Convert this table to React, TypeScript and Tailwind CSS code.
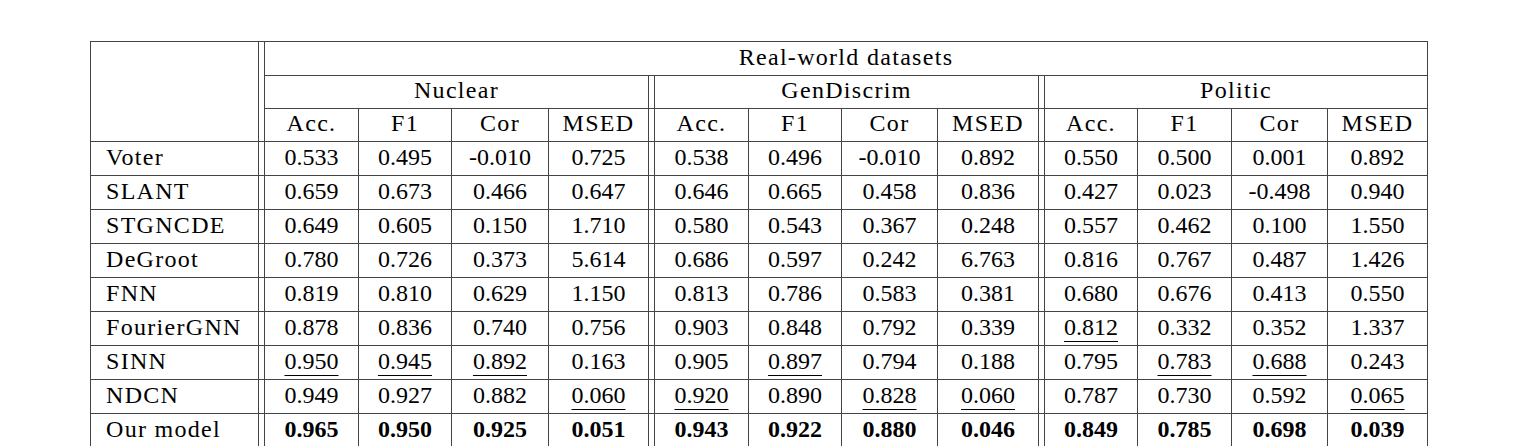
import React from 'react';

type Row = { name: string; values: string[] };

// "_" prefix marks the second best result (underlined)
const rows: Row[] = [
  { name: 'Voter', values: ['0.533', '0.495', '-0.010', '0.725', '0.538', '0.496', '-0.010', '0.892', '0.550', '0.500', '0.001', '0.892'] },
  { name: 'SLANT', values: ['0.659', '0.673', '0.466', '0.647', '0.646', '0.665', '0.458', '0.836', '0.427', '0.023', '-0.498', '0.940'] },
  { name: 'STGNCDE', values: ['0.649', '0.605', '0.150', '1.710', '0.580', '0.543', '0.367', '0.248', '0.557', '0.462', '0.100', '1.550'] },
  { name: 'DeGroot', values: ['0.780', '0.726', '0.373', '5.614', '0.686', '0.597', '0.242', '6.763', '0.816', '0.767', '0.487', '1.426'] },
  { name: 'FNN', values: ['0.819', '0.810', '0.629', '1.150', '0.813', '0.786', '0.583', '0.381', '0.680', '0.676', '0.413', '0.550'] },
  { name: 'FourierGNN', values: ['0.878', '0.836', '0.740', '0.756', '0.903', '0.848', '0.792', '0.339', '_0.812', '0.332', '0.352', '1.337'] },
  { name: 'SINN', values: ['_0.950', '_0.945', '_0.892', '0.163', '0.905', '_0.897', '0.794', '0.188', '0.795', '_0.783', '_0.688', '0.243'] },
  { name: 'NDCN', values: ['0.949', '0.927', '0.882', '_0.060', '_0.920', '0.890', '_0.828', '_0.060', '0.787', '0.730', '0.592', '_0.065'] },
];

const ours = ['0.965', '0.950', '0.925', '0.051', '0.943', '0.922', '0.880', '0.046', '0.849', '0.785', '0.698', '0.039'];

const metrics = ['Acc.', 'F1', 'Cor', 'MSED'];
const groups = ['Nuclear', 'GenDiscrim', 'Politic'];

const line = 'border-r border-b border-[#444]';
const cell = line + ' flex items-center justify-center pb-[4px]';
const label = 'tracking-[1.3px]';

const Value: React.FC<{ v: string; bold?: boolean }> = ({ v, bold }) => {
  const under = v.startsWith('_');
  const text = under ? v.slice(1) : v;
  return (
    <div className={cell}>
      <span
        className={
          (bold ? 'font-bold ' : '') +
          (under ? 'underline decoration-1 underline-offset-[6px]' : '')
        }
      >
        {text}
      </span>
    </div>
  );
};

const DataRow: React.FC<{ name: string; values: string[]; bold?: boolean }> = ({ name, values, bold }) => (
  <>
    <div className={line + ' flex items-center pl-[15px] pb-[4px] ' + label}>{name}</div>
    <div className={line} />
    {values.slice(0, 4).map((v, i) => (
      <Value key={'a' + i} v={v} bold={bold} />
    ))}
    <div className={line} />
    {values.slice(4, 8).map((v, i) => (
      <Value key={'b' + i} v={v} bold={bold} />
    ))}
    <div className={line} />
    {values.slice(8, 12).map((v, i) => (
      <Value key={'c' + i} v={v} bold={bold} />
    ))}
  </>
);

export default function App() {
  return (
    <div
      className="w-[1518px] h-[446px] overflow-hidden bg-white text-black pl-[90px] pt-[41px] text-[24px] leading-none"
      style={{ fontFamily: '"Liberation Serif", "DejaVu Serif", serif' }}
    >
      <div className="w-max border-l border-t border-[#444] grid grid-cols-[168px_6px_94px_93px_97px_100px_6px_94px_93px_96px_101px_6px_93px_94px_96px_100px] grid-rows-[34px_33px_33px_34px_34px_34px_34px_34px_34px_34px_34px_34px]">
        {/* header */}
        <div className={'row-span-3 ' + line} />
        <div className={'row-span-3 ' + line} />
        <div className={cell + ' col-span-14 ' + label}>Real-world datasets</div>

        {groups.map((g, i) => (
          <React.Fragment key={g}>
            {i > 0 && <div className={line} />}
            <div className={cell + ' col-span-4 ' + label}>{g}</div>
          </React.Fragment>
        ))}

        {groups.map((g, i) => (
          <React.Fragment key={'m' + g}>
            {i > 0 && <div className={line} />}
            {metrics.map((m) => (
              <div key={m} className={cell + ' ' + label}>
                {m}
              </div>
            ))}
          </React.Fragment>
        ))}

        {/* body */}
        {rows.map((r) => (
          <DataRow key={r.name} name={r.name} values={r.values} />
        ))}
        <DataRow name="Our model" values={ours} bold />
      </div>
    </div>
  );
}
